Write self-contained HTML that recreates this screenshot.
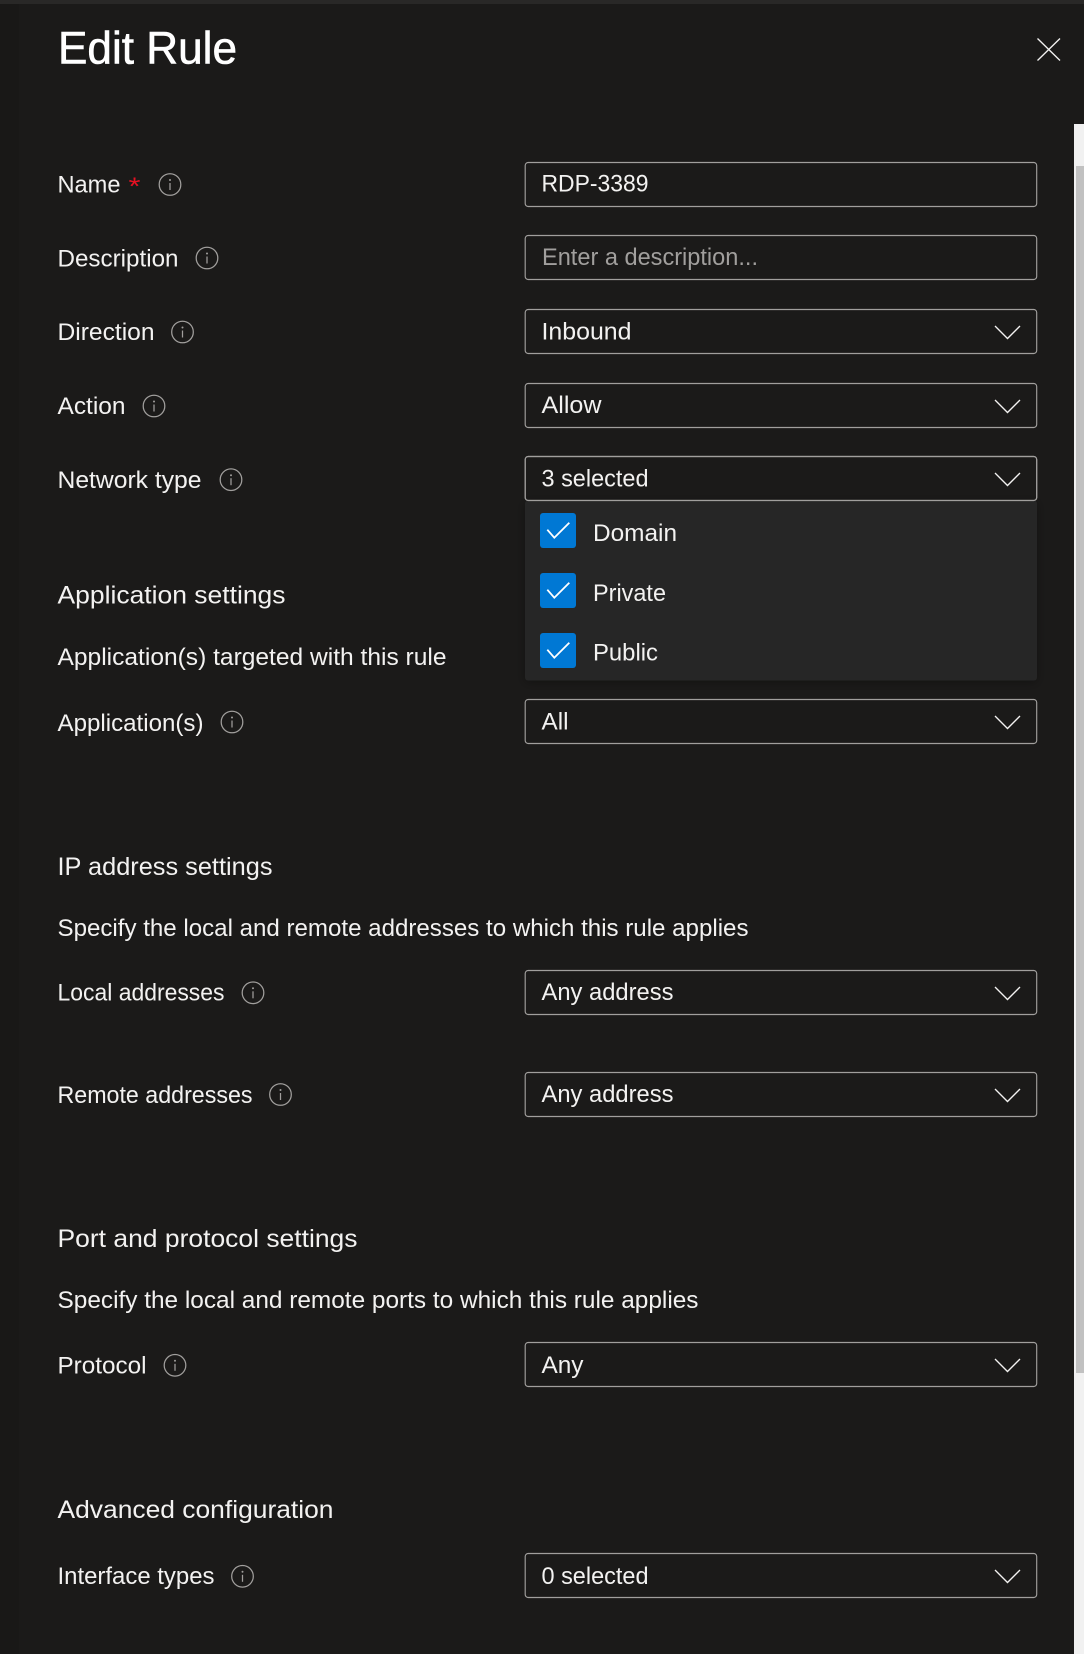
<!DOCTYPE html>
<html><head><meta charset="utf-8"><style>
html,body{margin:0;padding:0;width:1084px;height:1654px;overflow:hidden;background:#1b1a19}
svg{display:block}
text{font-family:"Liberation Sans",sans-serif;font-size:24px;fill:#f3f2f1}
.h{font-size:25px}
.b{fill:#1b1a19;stroke:#a19f9d;stroke-width:1.15}
.i{fill:none;stroke:#a19f9d;stroke-width:1.25}
.c{fill:none;stroke:#f3f2f1;stroke-width:1.35}
.k{fill:none;stroke:#fff;stroke-width:1.8}
.cb{fill:#0078d4}
</style></head><body>
<svg width="1084" height="1654" viewBox="0 0 1084 1654" xmlns="http://www.w3.org/2000/svg">
<defs>
<filter id="s" x="-5%" y="-10%" width="110%" height="125%"><feDropShadow dx="0" dy="2" stdDeviation="5" flood-color="#000" flood-opacity=".3"/></filter>
<g id="info"><circle cx="0" cy="0" r="10.8" class="i"/><path d="M0 -1.5V5.5" class="i"/><circle cx="0" cy="-4.5" r="1" fill="#a19f9d"/></g>
<path id="chev" d="M995 17L1007.5 29.5L1020 17" class="c"/>
<path id="chk" d="M547.3 16.7L554.3 24.7L569.3 9.7" class="k"/>
</defs>
<rect width="1084" height="1654" fill="#1b1a19"/>
<rect width="19" height="1654" fill="#191817"/>
<rect width="1084" height="4" fill="#292827"/>
<rect x="1074" y="124" width="10" height="1530" fill="#f1f1f1"/>
<rect x="1076" y="166" width="8" height="1207" fill="#c1c1c1"/>

<text x="58" y="63.5" style="font-size:45px;fill:#fff;stroke:#fff;stroke-width:.6" textLength="179" lengthAdjust="spacingAndGlyphs">Edit Rule</text>
<path d="M1037.5 38.5L1060 60.5M1060 38.5L1037.5 60.5" class="c"/>

<text x="57.5" y="192.7" textLength="63" lengthAdjust="spacingAndGlyphs">Name</text>
<text x="128.5" y="195" style="font-size:25px;fill:#e81123" textLength="12" lengthAdjust="spacingAndGlyphs">*</text>
<use href="#info" x="170" y="184.5"/>
<text x="57.5" y="266.5" textLength="121" lengthAdjust="spacingAndGlyphs">Description</text>
<use href="#info" x="207" y="258"/>
<text x="57.5" y="340" textLength="97" lengthAdjust="spacingAndGlyphs">Direction</text>
<use href="#info" x="182.5" y="332"/>
<text x="57.5" y="414" textLength="68" lengthAdjust="spacingAndGlyphs">Action</text>
<use href="#info" x="154" y="406"/>
<text x="57.5" y="488" textLength="144" lengthAdjust="spacingAndGlyphs">Network type</text>
<use href="#info" x="231" y="479.7"/>

<text class="h" x="57.5" y="603.5" textLength="228" lengthAdjust="spacingAndGlyphs">Application settings</text>
<text x="57.5" y="665" textLength="389" lengthAdjust="spacingAndGlyphs">Application(s) targeted with this rule</text>
<text x="57.5" y="731" textLength="146" lengthAdjust="spacingAndGlyphs">Application(s)</text>
<use href="#info" x="232" y="722"/>

<text class="h" x="57.5" y="875" textLength="215" lengthAdjust="spacingAndGlyphs">IP address settings</text>
<text x="57.5" y="936" textLength="691" lengthAdjust="spacingAndGlyphs">Specify the local and remote addresses to which this rule applies</text>
<text x="57.5" y="1000.5" textLength="167" lengthAdjust="spacingAndGlyphs">Local addresses</text>
<use href="#info" x="253" y="992.8"/>
<text x="57.5" y="1103" textLength="195" lengthAdjust="spacingAndGlyphs">Remote addresses</text>
<use href="#info" x="280.5" y="1094.5"/>

<text class="h" x="57.5" y="1247" textLength="300" lengthAdjust="spacingAndGlyphs">Port and protocol settings</text>
<text x="57.5" y="1308" textLength="641" lengthAdjust="spacingAndGlyphs">Specify the local and remote ports to which this rule applies</text>
<text x="57.5" y="1373.5" textLength="89" lengthAdjust="spacingAndGlyphs">Protocol</text>
<use href="#info" x="175" y="1365.3"/>

<text class="h" x="57.5" y="1518" textLength="276" lengthAdjust="spacingAndGlyphs">Advanced configuration</text>
<text x="57.5" y="1584" textLength="157" lengthAdjust="spacingAndGlyphs">Interface types</text>
<use href="#info" x="242.5" y="1576.3"/>

<rect class="b" x="525.2" y="162.5" width="511.5" height="44" rx="3"/>
<text x="541.5" y="191.5" textLength="107" lengthAdjust="spacingAndGlyphs">RDP-3389</text>
<rect class="b" x="525.2" y="235.5" width="511.5" height="44" rx="3"/>
<text x="542" y="265" style="fill:#a19f9d" textLength="216" lengthAdjust="spacingAndGlyphs">Enter a description...</text>

<rect class="b" x="525.2" y="309.5" width="511.5" height="44" rx="3"/>
<text x="541.5" y="339.5" textLength="90" lengthAdjust="spacingAndGlyphs">Inbound</text>
<use href="#chev" y="309"/>
<rect class="b" x="525.2" y="383.5" width="511.5" height="44" rx="3"/>
<text x="541.5" y="413" textLength="60" lengthAdjust="spacingAndGlyphs">Allow</text>
<use href="#chev" y="383"/>
<rect class="b" x="525.2" y="456.5" width="511.5" height="44" rx="3"/>
<text x="541.5" y="486.5" textLength="107" lengthAdjust="spacingAndGlyphs">3 selected</text>
<use href="#chev" y="456"/>

<rect x="525" y="500.5" width="512" height="180" rx="3" fill="#262625" filter="url(#s)"/>
<rect class="b" x="525.2" y="456.5" width="511.5" height="44" rx="3" style="fill:none"/>
<rect class="cb" x="540" y="513" width="36" height="35" rx="3"/><use href="#chk" y="513"/>
<text x="593" y="541" textLength="84" lengthAdjust="spacingAndGlyphs">Domain</text>
<rect class="cb" x="540" y="573" width="36" height="35" rx="3"/><use href="#chk" y="573"/>
<text x="593" y="601" textLength="73" lengthAdjust="spacingAndGlyphs">Private</text>
<rect class="cb" x="540" y="633" width="36" height="35" rx="3"/><use href="#chk" y="633"/>
<text x="593" y="660.5" textLength="65" lengthAdjust="spacingAndGlyphs">Public</text>

<rect class="b" x="525.2" y="699.5" width="511.5" height="44" rx="3"/>
<text x="541.5" y="729.5" textLength="27" lengthAdjust="spacingAndGlyphs">All</text>
<use href="#chev" y="699"/>
<rect class="b" x="525.2" y="970.5" width="511.5" height="44" rx="3"/>
<text x="541.5" y="1000" textLength="132" lengthAdjust="spacingAndGlyphs">Any address</text>
<use href="#chev" y="970"/>
<rect class="b" x="525.2" y="1072.5" width="511.5" height="44" rx="3"/>
<text x="541.5" y="1102" textLength="132" lengthAdjust="spacingAndGlyphs">Any address</text>
<use href="#chev" y="1072"/>
<rect class="b" x="525.2" y="1342.5" width="511.5" height="44" rx="3"/>
<text x="541.5" y="1373" textLength="42" lengthAdjust="spacingAndGlyphs">Any</text>
<use href="#chev" y="1342"/>
<rect class="b" x="525.2" y="1553.5" width="511.5" height="44" rx="3"/>
<text x="541.5" y="1584" textLength="107" lengthAdjust="spacingAndGlyphs">0 selected</text>
<use href="#chev" y="1553"/>
</svg>
</body></html>
